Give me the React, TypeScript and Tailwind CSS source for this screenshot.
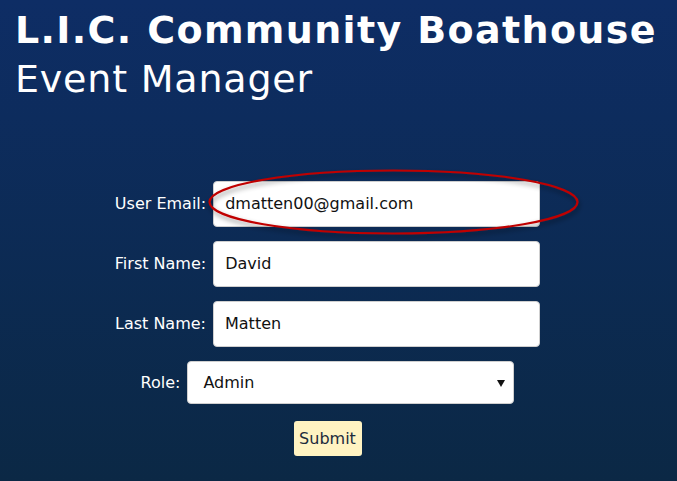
import React from "react";

const font = { fontFamily: '"DejaVu Sans", Verdana, sans-serif' };

function Row({ label, value }: { label: string; value: string }) {
  return (
    <div className="flex items-center justify-center gap-[7px]">
      <span className="text-[16px] text-white">{label}</span>
      <div className="w-[327px] h-[46px] bg-white rounded-[4px] border border-[#cfcfcf] flex items-center pl-[11px] text-[16px] text-[#111]">
        {value}
      </div>
    </div>
  );
}

export default function App() {
  return (
    <div
      className="relative w-[677px] h-[481px] overflow-hidden bg-gradient-to-b from-[#0e2d65] to-[#0b2845]"
      style={font}
    >
      <div className="pl-[15px] pt-[6px]">
        <h1 className="text-[38px] leading-[49px] font-bold text-white tracking-[1.35px] whitespace-nowrap">
          L.I.C. Community Boathouse
        </h1>
        <div className="text-[38px] leading-[49px] text-white tracking-[0.8px] whitespace-nowrap">
          Event Manager
        </div>
      </div>

      <div className="pr-[22px] mt-[77px] flex flex-col items-center gap-[14px]">
        <Row label="User Email:" value="dmatten00@gmail.com" />
        <Row label="First Name:" value="David" />
        <Row label="Last Name:" value="Matten" />
        <div className="flex items-center justify-center gap-[7px]">
          <span className="text-[16px] text-white">Role:</span>
          <div className="relative w-[327px] h-[43px] bg-white rounded-[4px] border border-[#cfcfcf] flex items-center pl-[15px] text-[16px] text-[#111]">
            Admin
            <svg className="absolute right-[8px] top-[17px]" width="8" height="8" viewBox="0 0 8 8">
              <polygon points="0,1 8,1 4,8" fill="#111" />
            </svg>
          </div>
        </div>
        <button className="mt-[3px] w-[68px] h-[35px] rounded-[3px] bg-[#fff3c2] text-[16px] text-[#1c2b3d] flex items-center justify-center">
          Submit
        </button>
      </div>

      <svg
        className="absolute left-0 top-0 pointer-events-none"
        width="677"
        height="481"
        viewBox="0 0 677 481"
      >
        <defs>
          <filter id="sh" x="-10%" y="-30%" width="120%" height="160%">
            <feDropShadow dx="1" dy="3" stdDeviation="2.5" floodColor="#000" floodOpacity="0.45" />
          </filter>
        </defs>
        <ellipse cx="393.5" cy="202" rx="184" ry="31.5" fill="none" stroke="#c00000" strokeWidth="2.2" filter="url(#sh)" />
      </svg>
    </div>
  );
}
